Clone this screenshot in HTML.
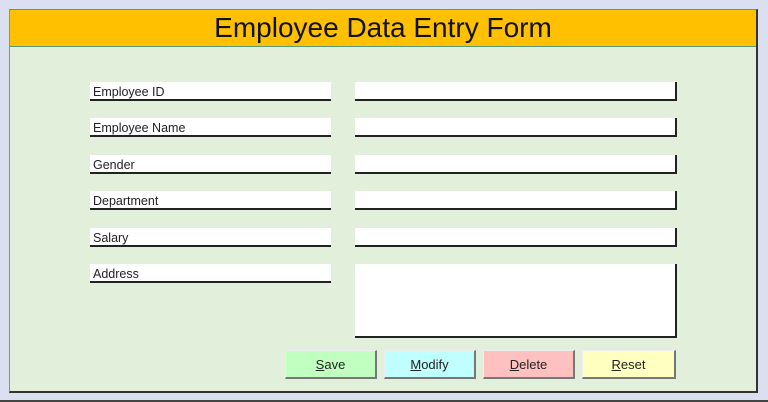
<!DOCTYPE html><html><head><style>
body{margin:0;width:768px;height:402px;background:#dae0ef;position:relative;overflow:hidden;font-family:"Liberation Sans",sans-serif}
.p{position:absolute;left:9px;top:9px;width:746px;height:381px;background:#e2efda;border-left:1px solid #7a9a86;border-top:1px solid #5a9a7a;border-right:2px solid #333;border-bottom:2px solid #333}
.t{position:absolute;left:10px;top:10px;width:746px;height:36px;background:#ffc000;border-bottom:1px solid #5a9a7a;text-align:center;font-size:28px;line-height:36px;color:#111}
.l{position:absolute;left:90px;width:238px;height:17px;background:#fff;border-bottom:2px solid #222;font-size:12.5px;line-height:20px;padding-left:3px;box-sizing:content-box;color:#222}
.i{position:absolute;left:355px;width:320px;height:17px;background:#fff;border-right:2px solid #222;border-bottom:2px solid #222}
.b{position:absolute;top:350px;height:26px;border:1px solid #eee;border-right:2px solid #777;border-bottom:2px solid #777;font-size:13px;line-height:28px;text-align:center;color:#222}
.bot{position:absolute;left:0;top:400px;width:768px;height:2px;background:#444}
</style></head><body>
<div class="p"></div><div class="t">Employee Data Entry Form</div>
<div class="l" style="top:82px">Employee ID</div><div class="i" style="top:82px"></div>
<div class="l" style="top:118px">Employee Name</div><div class="i" style="top:118px"></div>
<div class="l" style="top:155px">Gender</div><div class="i" style="top:155px"></div>
<div class="l" style="top:191px">Department</div><div class="i" style="top:191px"></div>
<div class="l" style="top:228px">Salary</div><div class="i" style="top:228px"></div>
<div class="l" style="top:264px">Address</div><div class="i" style="top:264px;height:72px"></div>
<div class="b" style="left:285px;width:89px;background:#c0ffc0"><u>S</u>ave</div>
<div class="b" style="left:384px;width:89px;background:#c0ffff"><u>M</u>odify</div>
<div class="b" style="left:483px;width:89px;background:#ffc0c0"><u>D</u>elete</div>
<div class="b" style="left:582px;width:91px;background:#ffffc0"><u>R</u>eset</div>
<div class="bot"></div>
</body></html>
